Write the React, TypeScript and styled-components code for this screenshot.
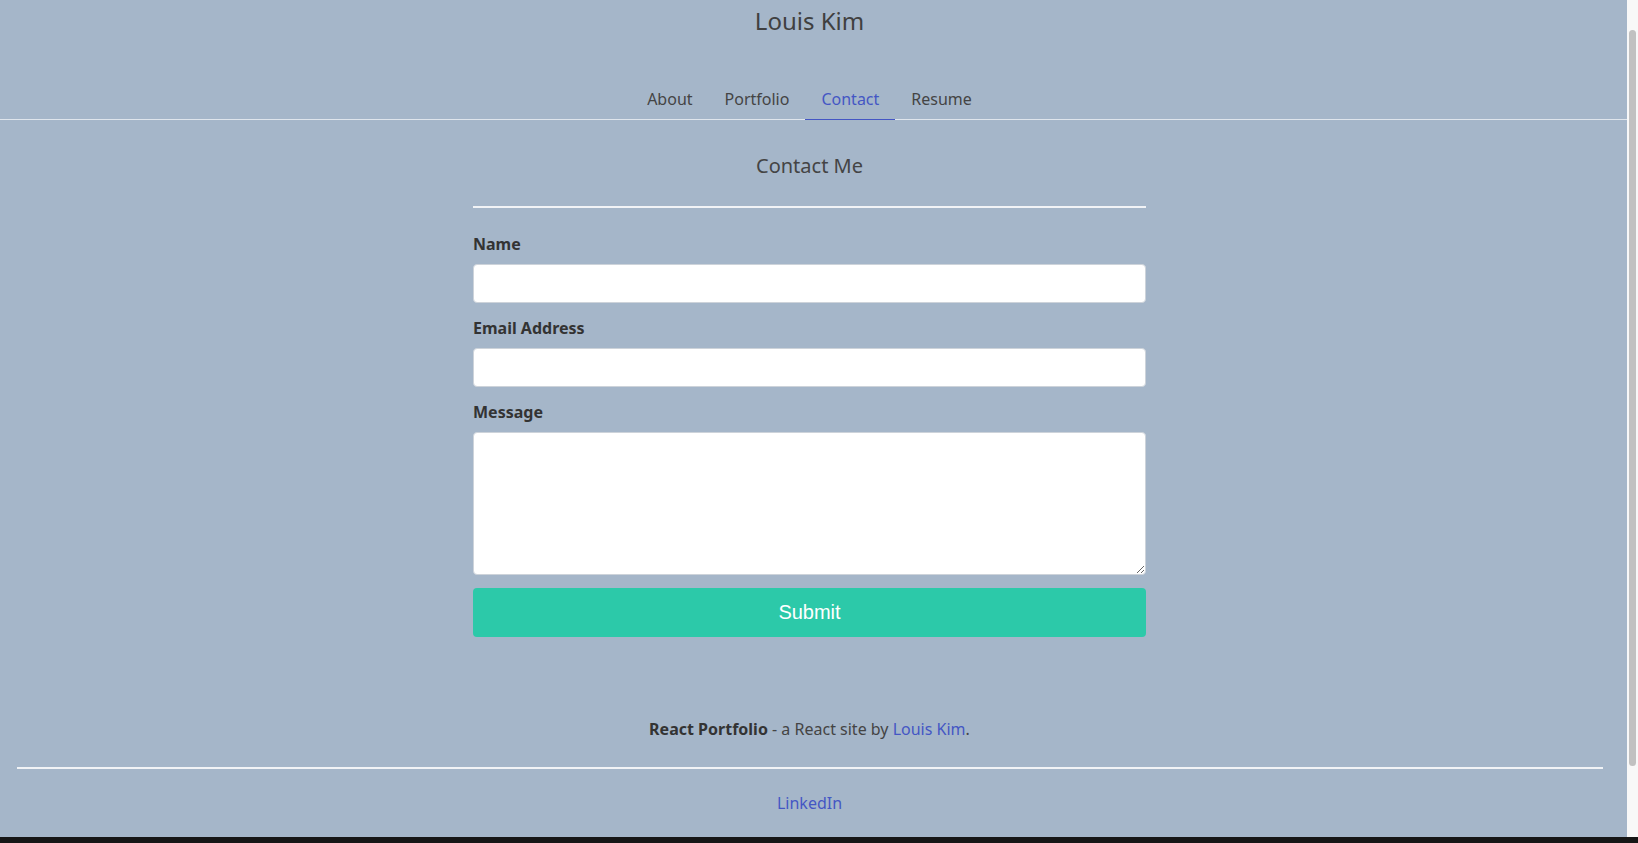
import styled, { createGlobalStyle } from 'styled-components';

const GlobalStyle = createGlobalStyle`
  body {
    margin: 0;
    background: #f8f8f8;
    font-family: 'Noto Sans', 'Open Sans', sans-serif;
    color: #444;
  }
`;

const Page = styled.div`
  margin-right: 11px;
  padding-right: 8px;
  min-height: 843px;
  background: #a5b6c9;
`;

const Header = styled.header`
  display: flex;
  flex-direction: column;
  align-items: center;
  margin-right: -8px;
  padding-right: 8px;
  border-bottom: 1px solid #dfe5ec;
`;

const Title = styled.h1`
  margin: 6px 0 0;
  font-size: 24px;
  font-weight: 400;
  line-height: 30px;
  color: #404040;
`;

const NavList = styled.ul`
  display: flex;
  list-style: none;
  margin: 43px 0 0;
  padding: 0;
`;

const NavLink = styled.a<{ $active?: boolean }>`
  display: block;
  padding: 8px 16px;
  margin-bottom: -1px;
  font-size: 16px;
  line-height: 24px;
  text-decoration: none;
  cursor: pointer;
  color: ${(p) => (p.$active ? '#4456c4' : '#444')};
  border-bottom: 1px solid ${(p) => (p.$active ? '#4456c4' : 'transparent')};
`;

const Main = styled.main`
  width: 673px;
  margin: 0 auto;
  padding-top: 34px;
`;

const Heading = styled.h2`
  margin: 0;
  text-align: center;
  font-size: 20px;
  font-weight: 400;
  line-height: 24px;
  color: #444;
`;

const Rule = styled.hr`
  margin: 28px 0 24px;
  border: 0;
  height: 2px;
  background: #f1f3f6;
`;

const Form = styled.form`
  display: flex;
  flex-direction: column;
  gap: 13px;
`;

const Field = styled.div`
  display: flex;
  flex-direction: column;
`;

const Label = styled.label`
  font-size: 16px;
  font-weight: 700;
  line-height: 24px;
  color: #333;
  margin-bottom: 8px;
`;

const Input = styled.input`
  box-sizing: border-box;
  height: 39px;
  padding: 6px 12px;
  font: inherit;
  background: #fff;
  border: 1px solid #cdd3da;
  border-radius: 4px;
`;

const TextArea = styled.textarea`
  box-sizing: border-box;
  height: 143px;
  padding: 6px 12px;
  font: inherit;
  background: #fff;
  border: 1px solid #cdd3da;
  border-radius: 4px;
`;

const SubmitButton = styled.button`
  height: 49px;
  border: 0;
  border-radius: 4px;
  background: #2cc9a9;
  color: #fff;
  font-family: 'Liberation Sans', Arial, sans-serif;
  font-size: 20px;
  cursor: pointer;
`;

const Footer = styled.footer`
  margin-top: 80px;
  padding-bottom: 28px;
  text-align: center;
  font-size: 16px;
  line-height: 24px;
`;

const Credit = styled.p`
  margin: 0;
  color: #444;

  strong {
    color: #333;
  }
`;

const BlueLink = styled.a`
  color: #4456c4;
  text-decoration: none;
`;

const FooterRule = styled.hr`
  margin: 26px 16px 22px 17px;
  border: 0;
  height: 2px;
  background: #f1f3f6;
`;

const ScrollTrack = styled.div`
  position: fixed;
  top: 0;
  right: 0;
  bottom: 0;
  width: 11px;
  background: #f8f8f8;
`;

const ScrollThumb = styled.div`
  margin: 30px 2px 0;
  height: 736px;
  border-radius: 4px;
  background: #c1c1c1;
`;

const Taskbar = styled.div`
  position: fixed;
  left: 0;
  right: 0;
  bottom: 0;
  height: 6px;
  background: #161616;
`;

const navItems = ['About', 'Portfolio', 'Contact', 'Resume'];

const App = () => {
  return (
    <Page>
      <GlobalStyle />
      <Header>
        <Title>Louis Kim</Title>
        <NavList>
          {navItems.map((item) => (
            <li key={item}>
              <NavLink $active={item === 'Contact'}>{item}</NavLink>
            </li>
          ))}
        </NavList>
      </Header>

      <Main>
        <Heading>Contact Me</Heading>
        <Rule />
        <Form onSubmit={(e) => e.preventDefault()}>
          <Field>
            <Label htmlFor="name">Name</Label>
            <Input id="name" type="text" />
          </Field>
          <Field>
            <Label htmlFor="email">Email Address</Label>
            <Input id="email" type="email" />
          </Field>
          <Field>
            <Label htmlFor="message">Message</Label>
            <TextArea id="message" />
          </Field>
          <SubmitButton type="submit">Submit</SubmitButton>
        </Form>
      </Main>

      <Footer>
        <Credit>
          <strong>React Portfolio</strong> - a React site by <BlueLink>Louis Kim</BlueLink>.
        </Credit>
        <FooterRule />
        <BlueLink>LinkedIn</BlueLink>
      </Footer>

      <ScrollTrack>
        <ScrollThumb />
      </ScrollTrack>
      <Taskbar />
    </Page>
  );
};

export default App;
